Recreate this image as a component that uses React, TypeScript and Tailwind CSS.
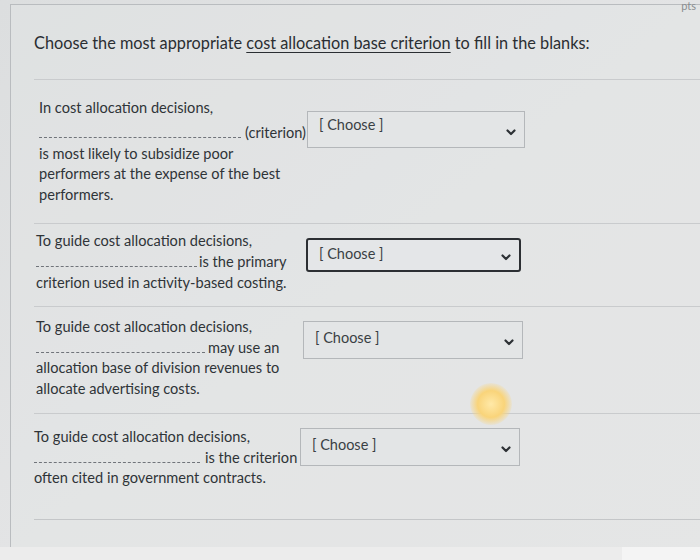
const font = { fontFamily: "Lato, 'Open Sans', sans-serif" };

function Blank({ w }: { w: string }) {
  return <span className={`inline-block ${w} border-b border-dashed border-[#70747a] align-baseline`} />;
}

function Select({ focused = false, w, h, mt, lift }: { focused?: boolean; w: string; h: string; mt: string; lift: string }) {
  return (
    <div
      className={`flex ${h} ${w} ${mt} shrink-0 items-center justify-between pl-[11px] pr-[7px] ${
        focused
          ? "rounded-[3px] border-2 border-[#2c2f33] bg-[#e4e6e8]"
          : "border border-[#b4b7ba] bg-[#e3e5e6]"
      }`}
    >
      <span className={`${lift} text-[14.5px] text-[#3a3f44]`}>[ Choose ]</span>
      <svg width="12" height="12" viewBox="0 0 12 12" className="mt-[4px]">
        <path d="M2.5 4.5 L6 8 L9.5 4.5" fill="none" stroke="#2d3135" strokeWidth="2.2" strokeLinecap="round" strokeLinejoin="round" />
      </svg>
    </div>
  );
}

export default function App() {
  return (
    <div
      className="relative h-[560px] w-[700px] overflow-hidden bg-gradient-to-br from-[#dcdedf] via-[#e3e4e5] to-[#e6e6e6] text-[#2f3438]"
      style={font}
    >
      <span className="absolute right-[4px] top-0 text-[11px] leading-[11px] text-[#8a8d90]">pts</span>
      <div className="ml-[10px] mt-[4px] h-[543px] border-l border-t border-[#b9bcbf] bg-[#e4e5e6]/40 pl-[23px]">
        <p className="pt-[26px] text-[16.3px] leading-[24px] text-[#2a2e32]">
          Choose the most appropriate{" "}
          <span className="underline decoration-1 underline-offset-[3px]">cost allocation base criterion</span> to fill
          in the blanks:
        </p>

        <div className="mt-[24px] text-[14.6px]">
          {/* row 1 */}
          <div className="flex h-[144px] items-start border-t border-[#c9cbcd] pt-[18px] leading-[20.5px]">
            <div className="ml-[5px] w-[268px]">
              <div>In cost allocation decisions,</div>
              <div className="mt-[4.5px] whitespace-nowrap">
                <Blank w="w-[202px]" />
                <span className="ml-[4px]">(criterion)</span>
              </div>
              <div>is most likely to subsidize poor</div>
              <div>performers at the expense of the best</div>
              <div>performers.</div>
            </div>
            <Select w="w-[218px]" h="h-[37px]" mt="mt-[13px]" lift="-mt-[8px]" />
          </div>

          {/* row 2 */}
          <div className="flex h-[83px] items-start border-t border-[#c9cbcd] pt-[6px] leading-[21px]">
            <div className="ml-[2px] w-[270px]">
              <div>To guide cost allocation decisions,</div>
              <div className="whitespace-nowrap">
                <Blank w="w-[161px]" />
                <span className="ml-[2px]">is the primary</span>
              </div>
              <div className="whitespace-nowrap">criterion used in activity-based costing.</div>
            </div>
            <Select focused w="w-[215px]" h="h-[34px]" mt="mt-[8px]" lift="-mt-[4px]" />
          </div>

          {/* row 3 */}
          <div className="flex h-[107px] items-start border-t border-[#c9cbcd] pt-[10px] leading-[20.5px]">
            <div className="ml-[2px] w-[267px]">
              <div>To guide cost allocation decisions,</div>
              <div className="whitespace-nowrap">
                <Blank w="w-[169px]" />
                <span className="ml-[3px]">may use an</span>
              </div>
              <div>allocation base of division revenues to</div>
              <div>allocate advertising costs.</div>
            </div>
            <Select w="w-[220px]" h="h-[38px]" mt="mt-[4px]" lift="-mt-[4px]" />
          </div>

          {/* row 4 */}
          <div className="flex h-[106px] items-start border-t border-[#c9cbcd] pt-[13px] leading-[20.5px]">
            <div className="w-[266px]">
              <div>To guide cost allocation decisions,</div>
              <div className="whitespace-nowrap">
                <Blank w="w-[166px]" />
                <span className="ml-[5px]">is the criterion</span>
              </div>
              <div>often cited in government contracts.</div>
            </div>
            <Select w="w-[220px]" h="h-[38px]" mt="mt-[1px]" lift="-mt-[4px]" />
          </div>

          <div className="border-t border-[#c4c6c8]" />
        </div>
      </div>
      <div className="flex h-[13px] justify-end bg-[#ececec]">
        <div className="w-[78px] bg-[#f4f4f4]" />
      </div>
      <div className="pointer-events-none absolute left-[470px] top-[383px] h-[42px] w-[42px] rounded-full bg-[radial-gradient(circle,#ffe9a8_0%,#f9d47a_45%,rgba(249,212,122,0)_75%)]" />
    </div>
  );
}
